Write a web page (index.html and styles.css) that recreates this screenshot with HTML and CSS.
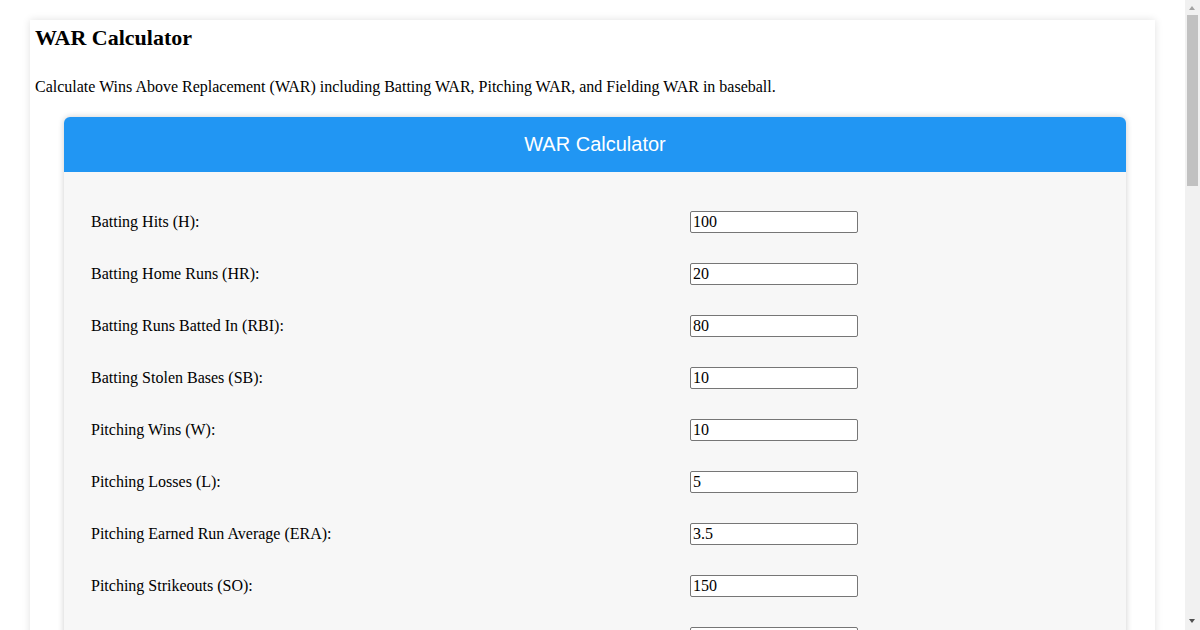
FILE: index.html
```html
<!DOCTYPE html>
<html lang="en">
<head>
    <meta charset="UTF-8">
    <meta name="viewport" content="width=device-width, initial-scale=1.0">
    <title>WAR Calculator</title>
    <link rel="stylesheet" href="styles.css">
</head>
<body>
    <div class="page">
        <h2 class="page-title">WAR Calculator</h2>
        <p class="intro">Calculate Wins Above Replacement (WAR) including Batting WAR, Pitching WAR, and Fielding WAR in baseball.</p>

        <div class="calculator">
            <div class="calculator-header">WAR Calculator</div>
            <div class="calculator-body">
                <div class="form-row">
                    <label for="hits">Batting Hits (H):</label>
                    <input type="text" id="hits" value="100">
                </div>
                <div class="form-row">
                    <label for="homeRuns">Batting Home Runs (HR):</label>
                    <input type="text" id="homeRuns" value="20">
                </div>
                <div class="form-row">
                    <label for="rbi">Batting Runs Batted In (RBI):</label>
                    <input type="text" id="rbi" value="80">
                </div>
                <div class="form-row">
                    <label for="stolenBases">Batting Stolen Bases (SB):</label>
                    <input type="text" id="stolenBases" value="10">
                </div>
                <div class="form-row">
                    <label for="wins">Pitching Wins (W):</label>
                    <input type="text" id="wins" value="10">
                </div>
                <div class="form-row">
                    <label for="losses">Pitching Losses (L):</label>
                    <input type="text" id="losses" value="5">
                </div>
                <div class="form-row">
                    <label for="era">Pitching Earned Run Average (ERA):</label>
                    <input type="text" id="era" value="3.5">
                </div>
                <div class="form-row">
                    <label for="strikeouts">Pitching Strikeouts (SO):</label>
                    <input type="text" id="strikeouts" value="150">
                </div>
                <div class="form-row">
                    <label for="putouts">Fielding Putouts (PO):</label>
                    <input type="text" id="putouts" value="200">
                </div>
                <div class="form-row">
                    <label for="assists">Fielding Assists (A):</label>
                    <input type="text" id="assists" value="50">
                </div>
                <div class="form-row">
                    <label for="errors">Fielding Errors (E):</label>
                    <input type="text" id="errors" value="5">
                </div>
                <div class="form-row">
                    <label for="games">Games Played (G):</label>
                    <input type="text" id="games" value="150">
                </div>
                <div class="form-row">
                    <label for="innings">Innings Pitched (IP):</label>
                    <input type="text" id="innings" value="180">
                </div>
                <button class="calc-button" onclick="calculateWAR()">Calculate</button>
                <div class="result" id="result">
                    <p>Batting WAR: <span id="battingWar">-</span></p>
                    <p>Pitching WAR: <span id="pitchingWar">-</span></p>
                    <p>Fielding WAR: <span id="fieldingWar">-</span></p>
                    <p>Total WAR: <span id="totalWar">-</span></p>
                </div>
            </div>
        </div>

        <div class="article">
            <h3>What is WAR?</h3>
            <p>Wins Above Replacement (WAR) is a statistic that tries to sum up a player's total contribution to their team in one number. It estimates how many more wins a player is worth than a replacement-level player at the same position.</p>
            <h3>Batting WAR</h3>
            <p>Batting WAR looks at what a hitter does at the plate: hits, home runs, runs batted in and stolen bases all add value.</p>
            <h3>Pitching WAR</h3>
            <p>Pitching WAR weighs wins, losses, earned run average and strikeouts over the innings a pitcher throws.</p>
            <h3>Fielding WAR</h3>
            <p>Fielding WAR rewards putouts and assists and takes away for errors made in the field.</p>
            <h3>How to use this calculator</h3>
            <p>Enter the season totals for each stat above and press Calculate. The calculator shows the batting, pitching and fielding parts and the total WAR.</p>
            <h3>Notes</h3>
            <p>This is a simplified estimate. Official WAR figures use park factors, league averages and positional adjustments that are not included here.</p>
        </div>
    </div>

    <!-- window scrollbar, drawn by hand since the capture hides the native one -->
    <div class="scrollbar">
        <div class="scroll-arrow up"></div>
        <div class="scroll-thumb"></div>
        <div class="scroll-arrow down"></div>
    </div>

    <script>
        function val(id) {
            return parseFloat(document.getElementById(id).value) || 0;
        }

        function calculateWAR() {
            const batting = (val('hits') * 0.02 + val('homeRuns') * 0.1 + val('rbi') * 0.01 + val('stolenBases') * 0.02);
            const pitching = (val('wins') * 0.2 - val('losses') * 0.1 + val('strikeouts') * 0.01 + (4.5 - val('era')) * 0.5);
            const fielding = (val('putouts') * 0.005 + val('assists') * 0.01 - val('errors') * 0.05);
            document.getElementById('battingWar').textContent = batting.toFixed(2);
            document.getElementById('pitchingWar').textContent = pitching.toFixed(2);
            document.getElementById('fieldingWar').textContent = fielding.toFixed(2);
            document.getElementById('totalWar').textContent = (batting + pitching + fielding).toFixed(2);
        }
    </script>
</body>
</html>
```

FILE: styles.css
```css
body {
    margin: 0;
    padding: 0 15px 0 0;
    background-color: #fff;
    font-family: 'Liberation Serif', 'Times New Roman', serif;
    font-size: 16px;
    color: #000;
}
.page {
    margin: 20px 30px;
    padding: 5px 5px 20px;
    background-color: #fff;
    box-shadow: 0 0 8px rgba(0, 0, 0, 0.12);
}
.page-title {
    margin: 0 0 28px;
    font-size: 22px;
    line-height: 25px;
    font-weight: bold;
}
.intro {
    margin: 0 0 21px;
}
.calculator {
    width: 1062px;
    margin-left: 29px;
    border-radius: 6px;
    background-color: #f7f7f7;
    box-shadow: 0 0 6px rgba(0, 0, 0, 0.2);
    overflow: hidden;
}
.calculator-header {
    height: 55px;
    line-height: 55px;
    background-color: #2196f3;
    color: #fff;
    text-align: center;
    font-family: 'Liberation Sans', Arial, sans-serif;
    font-size: 20px;
}
.calculator-body {
    padding: 39px 27px 30px;
}
.form-row {
    display: grid;
    grid-template-columns: 599px auto;
    align-items: center;
    margin-bottom: 30px;
}
.form-row label {
    font-size: 16px;
}
.form-row input {
    width: 162px;
    font-family: inherit;
    font-size: 16px;
    padding: 1px 2px;
    border: 1px solid #767676;
    border-radius: 2px;
    background-color: #fff;
    justify-self: start;
}
.calc-button {
    background-color: #2196f3;
    color: #fff;
    border: none;
    border-radius: 4px;
    padding: 10px 20px;
    font-size: 16px;
    cursor: pointer;
}
.result {
    margin-top: 20px;
}
.article {
    padding: 20px 29px;
    line-height: 1.6;
}
.article h3 {
    margin: 24px 0 8px;
}
.scrollbar {
    position: fixed;
    top: 0;
    right: 0;
    width: 15px;
    height: 100%;
    background-color: #f1f1f1;
}
.scroll-thumb {
    position: absolute;
    top: 15px;
    left: 2px;
    width: 11px;
    height: 171px;
    background-color: #c1c1c1;
}
.scroll-arrow {
    position: absolute;
    left: 4px;
    width: 0;
    height: 0;
    border-left: 3.5px solid transparent;
    border-right: 3.5px solid transparent;
}
.scroll-arrow.up {
    top: 6px;
    border-bottom: 4px solid #a3a3a3;
}
.scroll-arrow.down {
    bottom: 7px;
    border-top: 4px solid #505050;
}
```
